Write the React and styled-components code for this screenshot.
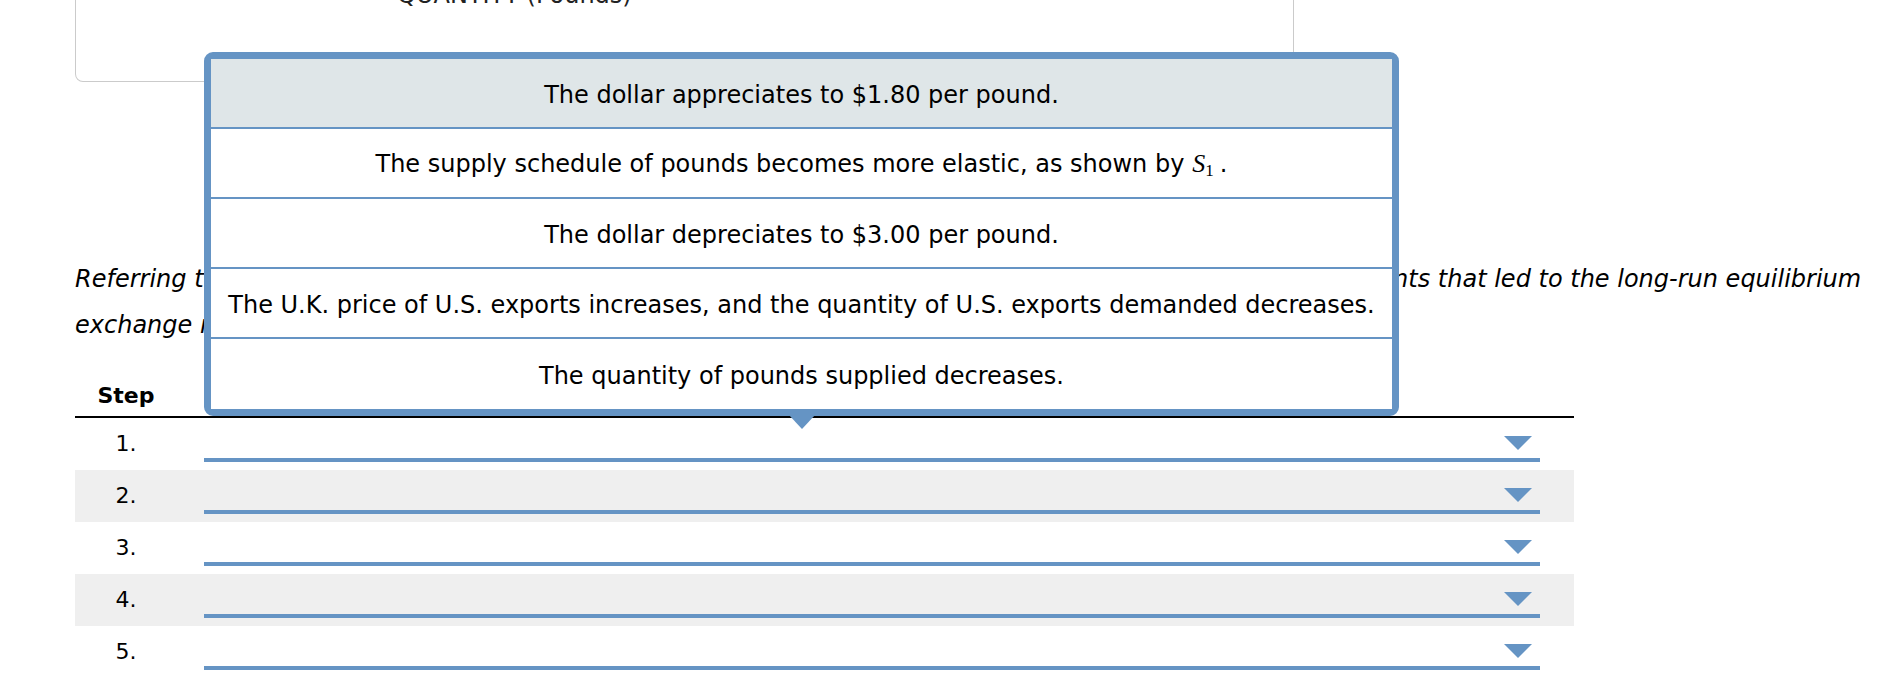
import styled, { createGlobalStyle } from "styled-components";

const Global = createGlobalStyle`
	html {
		overflow: hidden;
	}
	html, body {
		margin: 0;
		padding: 0;
		background: #fff;
	}
	body {
		font-family: "DejaVu Sans", Verdana, sans-serif;
		color: #000;
	}
`
const Page = styled.div`
	position: relative;
	display: flow-root;
	padding-left: 75px;
`
const GraphCard = styled.div`
	box-sizing: border-box;
	width: 1219px;
	margin-top: -40px;
	padding: 21px 0 72px 321px;
	border: 1px solid #cbcbcb;
	border-top: none;
	border-radius: 0 0 8px 8px;
`
const AxisLabel = styled.div`
	font-size: 24px;
	line-height: 28px;
	color: #222;
`
const Question = styled.p`
	width: 1805px;
	margin: 174px 0 0;
	font-size: 24px;
	line-height: 46px;
	font-style: italic;
`
const Table = styled.div`
	width: 1499px;
`
const HeadRow = styled.div`
	display: grid;
	grid-template-columns: 102px 1fr;
	height: 70px;
	box-sizing: border-box;
	align-items: end;
	padding-bottom: 7px;
	border-bottom: 2px solid #000;
`
const HeadCell = styled.div`
	font-size: 22px;
	font-weight: bold;
	line-height: 26px;
	text-align: center;
`
const Row = styled.div`
	display: grid;
	grid-template-columns: 102px 1fr;
	height: 52px;
	background: ${props => props.shaded ? "#efefef" : "transparent"};
`
const StepNum = styled.div`
	font-size: 22px;
	line-height: 52px;
	text-align: center;
`
const Select = styled.div`
	box-sizing: border-box;
	margin: 0 34px 0 27px;
	height: 44px;
	padding-top: 18px;
	border-bottom: 4px solid #6594c4;
	display: flex;
	justify-content: flex-end;
	align-items: flex-start;
`
const Arrow = styled.svg`
	display: block;
	margin-right: 8px;
`
const Popup = styled.div`
	position: absolute;
	left: 204px;
	top: 52px;
	width: 1195px;
	height: 364px;
	box-sizing: border-box;
	border: 7px solid #6594c4;
	border-radius: 9px;
	background: #fff;
	z-index: 2;

	&::after {
		content: "";
		position: absolute;
		left: 577px;
		top: calc(100% + 5px);
		border-left: 14px solid transparent;
		border-right: 14px solid transparent;
		border-top: 15px solid #6594c4;
	}
`
const Option = styled.div`
	box-sizing: border-box;
	height: 70px;
	padding-top: 3px;
	display: flex;
	align-items: center;
	justify-content: center;
	font-size: 24px;
	background: ${props => props.active ? "#dfe6e8" : "#fff"};
	border-bottom: ${props => props.last ? "none" : "2px solid #6594c4"};
`
const MathVar = styled.span`
	font-family: "Liberation Serif", "Times New Roman", serif;
	font-style: italic;
	font-size: 26px;
	margin-left: 8px;
	margin-right: 6px;
	sub {
		font-style: normal;
		font-size: 17px;
		vertical-align: -4px;
	}
`

const options = [
	"The dollar appreciates to $1.80 per pound.",
	"S1",
	"The dollar depreciates to $3.00 per pound.",
	"The U.K. price of U.S. exports increases, and the quantity of U.S. exports demanded decreases.",
	"The quantity of pounds supplied decreases.",
]

function App() {
	return (
		<Page>
			<Global />
			<GraphCard>
				<AxisLabel>QUANTITY (Pounds)</AxisLabel>
			</GraphCard>
			<Question>
				Referring to the previous graph, arrange the following steps in the correct order to show the sequence of events that led to the long-run equilibrium exchange rate.
			</Question>
			<Table>
				<HeadRow>
					<HeadCell>Step</HeadCell>
					<div></div>
				</HeadRow>
				{[1, 2, 3, 4, 5].map(n => (
					<Row key={n} shaded={n % 2 === 0}>
						<StepNum>{n}.</StepNum>
						<Select>
							<Arrow width="28" height="14" viewBox="0 0 28 14">
								<polygon points="0,0 28,0 14,14" fill="#6594c4" />
							</Arrow>
						</Select>
					</Row>
				))}
			</Table>
			<Popup>
				{options.map((o, i) => (
					<Option key={i} active={i === 0} last={i === options.length - 1}>
						{o === "S1" ? (
							<span>
								The supply schedule of pounds becomes more elastic, as shown by
								<MathVar>S<sub>1</sub></MathVar>.
							</span>
						) : o}
					</Option>
				))}
			</Popup>
		</Page>
	)
}

export default App;
